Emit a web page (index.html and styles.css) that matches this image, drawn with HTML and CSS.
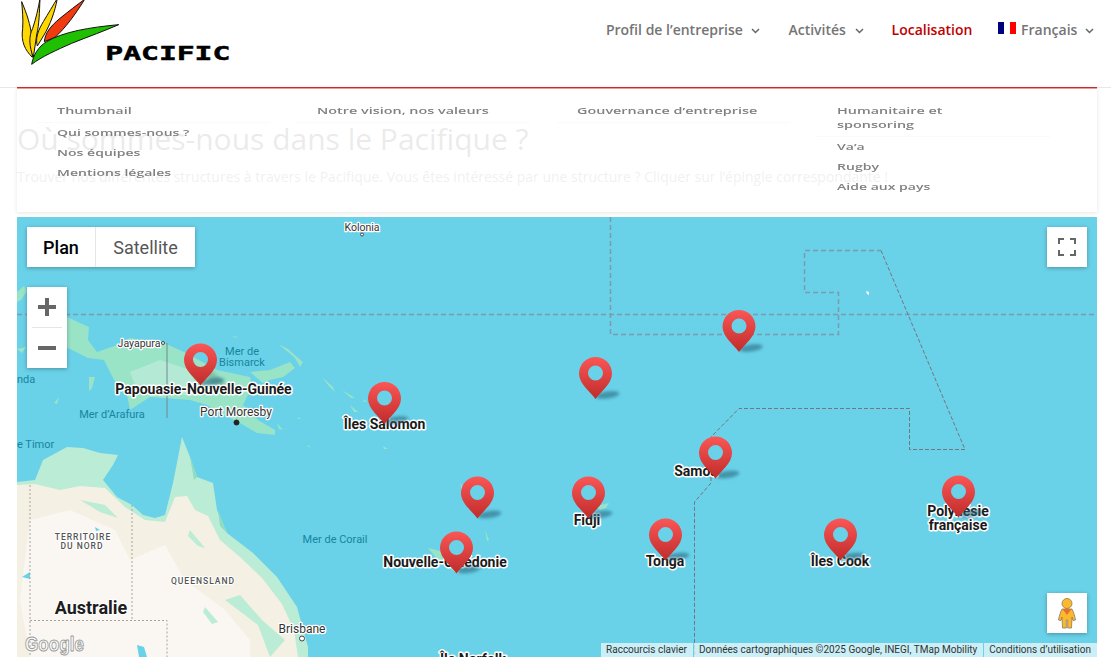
FILE: index.html
```html
<!DOCTYPE html>
<html lang="fr">
<head>
    <meta charset="UTF-8">
    <meta name="viewport" content="width=device-width, initial-scale=1.0">
    <title>Localisation - Pacific</title>
    <link rel="stylesheet" href="styles.css">
</head>
<body>
    <header class="site-header">
        <a href="#" class="logo">
            <svg width="240" height="87" viewBox="0 0 720 261">
                <g stroke="#111" stroke-width="3" stroke-linejoin="round">
                    <path fill="#ffd800" d="M65 5C80 40 92 75 95 110L97 172C75 150 62 125 68 85C70 55 67 30 65 5Z"/>
                    <path fill="#ffd800" d="M120 -5C118 40 118 70 110 105L100 172C88 140 85 110 98 85C108 55 115 25 120 -5Z"/>
                    <path fill="#ffd800" d="M172 -5C165 35 150 75 132 105L112 138C105 115 115 90 130 65C145 40 160 15 172 -5Z"/>
                    <path fill="#f03a10" d="M254 -2C225 45 195 85 165 112L133 125C135 100 150 80 180 55C205 35 230 15 254 -2Z"/>
                    <path fill="#1fc000" d="M356 74C270 82 190 95 140 125C115 140 100 165 95 193C125 170 170 150 215 130C265 110 315 92 356 74Z"/>
                </g>
                <text class="logo-text" x="316" y="179" textLength="375" lengthAdjust="spacingAndGlyphs">PACIFIC</text>
            </svg>
        </a>
        <nav class="main-nav">
            <a href="#" class="nav-item">Profil de l’entreprise <svg class="chevron" width="9" height="6" viewBox="0 0 9 6"><path d="M1 1l3.5 3.5L8 1"/></svg></a>
            <a href="#" class="nav-item">Activités <svg class="chevron" width="9" height="6" viewBox="0 0 9 6"><path d="M1 1l3.5 3.5L8 1"/></svg></a>
            <a href="#" class="nav-item current">Localisation</a>
            <a href="#" class="nav-item lang">
                <span class="flag"><i class="blue"></i><i class="white"></i><i class="red"></i></span>
                Français <svg class="chevron" width="9" height="6" viewBox="0 0 9 6"><path d="M1 1l3.5 3.5L8 1"/></svg>
            </a>
        </nav>
    </header>

    <div class="mega-menu">
        <div class="mega-col">
            <div class="mega-title"><span>Thumbnail</span></div>
            <a href="#">Qui sommes-nous ?</a>
            <a href="#">Nos équipes</a>
            <a href="#">Mentions légales</a>
        </div>
        <div class="mega-col">
            <div class="mega-title"><span>Notre vision, nos valeurs</span></div>
        </div>
        <div class="mega-col">
            <div class="mega-title"><span>Gouvernance d’entreprise</span></div>
        </div>
        <div class="mega-col">
            <div class="mega-title"><span>Humanitaire et</span><span>sponsoring</span></div>
            <a href="#">Va’a</a>
            <a href="#">Rugby</a>
            <a href="#">Aide aux pays</a>
        </div>
    </div>

    <main class="content">
        <h1>Où sommes-nous dans le Pacifique ?</h1>
        <p>Trouver nos différentes structures à travers le Pacifique. Vous êtes intéressé par une structure ? Cliquer sur l’épingle correspondante !</p>

        <div class="map">
            <svg class="map-canvas" width="1080" height="440" viewBox="17 217 1080 440">
                <defs>
                    <linearGradient id="pinFill" x1="0" y1="0" x2="0" y2="1">
                        <stop offset="0" stop-color="#fb5656"/>
                        <stop offset="1" stop-color="#bf2c2a"/>
                    </linearGradient>
                    <filter id="blur" x="-50%" y="-100%" width="200%" height="300%">
                        <feGaussianBlur stdDeviation="1.8"/>
                    </filter>
                    <filter id="soft" x="-20%" y="-20%" width="140%" height="140%">
                        <feGaussianBlur stdDeviation="1.5"/>
                    </filter>
                    <symbol id="pin" overflow="visible">
                        <ellipse cx="12" cy="-4" rx="12" ry="3.5" fill="#2a6a80" fill-opacity=".6" filter="url(#blur)" transform="rotate(-8 12 -4)"/>
                        <path fill="url(#pinFill)" fill-rule="evenodd" d="M0 0C-5-7-16.5-15-16.5-25.5A16.5 16.5 0 0 1 16.5-25.5C16.5-15 5-7 0 0ZM0-33.500a7.500 7.500 0 1 0 0 15a7.500 7.500 0 1 0 0-15Z"/>
                    </symbol>
                </defs>

                <rect x="17" y="217" width="1080" height="440" fill="#69d1e8"/>

                <!-- nouvelle guinee et iles -->
                <g fill="#99e3c7">
                    <path d="M62 315L67 317 89 327 88 340 97 352 117 345 130 338 164 343 184 352 217 370 250 377 252 387 243 405 258 420 275 430 275 435 257 433 240 423 220 413 207 405 190 400 150 397 130 410 127 395 114 380 104 360 88 358 62 345Z"/>
                    <path d="M250 372L270 370 290 362 295 368 283 377 270 380 263 383Z"/>
                    <path d="M278 344L288 349 297 357 303 362 300 367 295 358 287 351Z"/>
                    <path d="M232 336L238 337 236 338Z"/>
                    <path d="M322 377L333 387 335 392 328 385Z"/>
                    <path d="M342 390L355 398 351 398Z"/>
                    <path d="M350 405L358 412 354 412Z"/>
                    <path d="M363 399L367 402 364 402Z"/>
                    <path d="M298 417L301 419 298 419Z"/>
                    <path d="M277 423L283 430 279 429Z"/>
                    <path d="M307 445L311 447 308 447Z"/>
                    <path d="M383 446L388 449 384 449Z"/>
                    <path d="M17 292L24 286 27 291 21 300 17 302Z"/>
                    <path d="M17 349L26 347 22 353Z"/>
                    <path d="M89 377L95 377 92 388 89 391Z"/>
                    <path d="M54 403L59 397 57 404Z"/>
                    <path d="M460 483L465 490 469 500 464 500Z"/>
                    <path d="M472 497L476 508 473 505Z"/>
                    <path d="M485 530L489 540 487 541Z"/>
                    <path d="M428 548L440 551 460 570 458 574 440 562Z"/>
                    <path d="M596 506L609 503 606 508 600 510Z"/>
                </g>
                <path fill="#b4ead5" d="M130 372L160 360 190 370 200 396 150 392 136 388Z"/>
                <path fill="#76b8a2" fill-opacity=".7" filter="url(#soft)" d="M202 368L214 372 226 385 212 385Z"/>

                <!-- australie -->
                <path fill="#bbecd6" d="M17 482L35 480 43 460 67 447 83 448 100 453 118 455 113 465 103 480 117 497 132 505 143 515 155 518 165 515 173 483 182 437 190 457 197 477 213 483 217 510 227 533 253 553 277 577 297 607 308 647 308 657 17 657Z"/>
                <path fill="#f4f0e4" d="M17 485L35 484 60 490 80 486 105 488 125 507 145 520 165 522 175 497 187 496 195 510 208 516 220 540 240 557 262 578 282 604 294 630 298 657 17 657Z"/>
                <path fill="#faf7f3" d="M30 520L70 510 115 530 130 560 165 545 185 580 225 610 250 640 250 657 30 657 20 600Z"/>
                <g fill="#bbecd6">
                    <path d="M80 500L105 505 118 518 100 512Z"/>
                    <path d="M190 530L205 548 198 546 188 536Z"/>
                    <path d="M225 600L240 595 262 620 285 640 270 657 258 625Z"/>
                    <path d="M205 607L218 622 212 624 203 612Z"/>
                </g>
                <g fill="#8fdcc0">
                    <path d="M190 457L197 477 194 480Z"/>
                    <path d="M218 510L227 533 220 526Z"/>
                </g>
                <g fill="#69d1e8">
                    <path d="M22 577L30 572 30 579Z"/>
                    <path d="M137 645L144 647 147 657 139 657Z"/>
                    <path d="M95 527L100 530 96 531Z"/>
                </g>

                <!-- frontieres -->
                <g fill="none">
                    <path class="border-wide" d="M17 314.500H1097"/>
                    <path class="border-wide" d="M610.500 217V334.500H838.500V292.500H804.500V250.500H881"/>
                    <path class="border-thin" d="M881 250.500L965 449.500H909.500V408.500H739L711 437M711 477V483L694.500 502V657"/>
                    <path class="border-land" d="M167 343V418"/>
                    <path class="border-state" d="M30 485V657M132 505V620M30 620.500H167V657"/>
                </g>
                <path fill="#fff" d="M866 291l3 1v3l-2-1z"/>

                <!-- libelles -->
                <text class="water" x="242" y="355">Mer de</text>
                <text class="water" x="242" y="366">Bismarck</text>
                <text class="water" x="112" y="418">Mer d’Arafura</text>
                <text class="water" x="335" y="543">Mer de Corail</text>
                <text class="water start" x="17" y="383">nda</text>
                <text class="water start" x="17" y="448">e Timor</text>
                <text class="city small" x="362" y="231">Kolonia</text>
                <text class="city small" x="139" y="347">Jayapura</text>
                <text class="city" x="236" y="416">Port Moresby</text>
                <text class="city" x="302" y="633">Brisbane</text>
                <circle class="dot" cx="362" cy="234.500" r="1.500"/>
                <circle class="dot" cx="163" cy="343" r="1.500"/>
                <circle class="dot" cx="302" cy="638.500" r="2.500"/>
                <circle class="dot capital" cx="236.500" cy="422.500" r="2.500"/>
                <text class="region" x="83" y="540">TERRITOIRE</text>
                <text class="region" x="82" y="549">DU NORD</text>
                <text class="region" x="203" y="584">QUEENSLAND</text>
                <text class="continent" x="91" y="614">Australie</text>
                <text class="google" x="25" y="651" textLength="59" lengthAdjust="spacingAndGlyphs">Google</text>
                <text class="country" x="203.500" y="394">Papouasie-Nouvelle-Guinée</text>
                <text class="country" x="384.500" y="429">Îles Salomon</text>
                <text class="country" x="696" y="476">Samoa</text>
                <text class="country" x="445" y="567">Nouvelle-Calédonie</text>
                <text class="country" x="587" y="525">Fidji</text>
                <text class="country" x="665" y="566">Tonga</text>
                <text class="country" x="840" y="566">Îles Cook</text>
                <text class="country" x="958" y="516">Polynésie</text>
                <text class="country" x="958" y="530">française</text>
                <text class="country" x="473" y="664">Île Norfolk</text>

                <use href="#pin" x="200.500" y="385.500"/>
                <use href="#pin" x="384.500" y="424"/>
                <use href="#pin" x="595.500" y="399"/>
                <use href="#pin" x="739" y="352"/>
                <use href="#pin" x="715.500" y="478.500"/>
                <use href="#pin" x="588.500" y="518.500"/>
                <use href="#pin" x="477.500" y="518.500"/>
                <use href="#pin" x="456.500" y="573.500"/>
                <use href="#pin" x="665.500" y="560.500"/>
                <use href="#pin" x="840.500" y="560.500"/>
                <use href="#pin" x="958.500" y="517.500"/>
            </svg>

            <div class="map-type">
                <button class="map-btn active">Plan</button>
                <button class="map-btn">Satellite</button>
            </div>

            <button class="ctrl fullscreen">
                <svg width="18" height="18" viewBox="0 0 18 18"><path d="M1 6V1H6M12 1H17V6M17 12V17H12M6 17H1V12"/></svg>
            </button>

            <div class="zoom-ctrl">
                <button class="zoom-btn"><svg width="18" height="18" viewBox="0 0 18 18"><path d="M0 9H18M9 0V18"/></svg></button>
                <div class="zoom-sep"></div>
                <button class="zoom-btn"><svg width="18" height="18" viewBox="0 0 18 18"><path d="M0 9H18"/></svg></button>
            </div>

            <button class="ctrl pegman">
                <svg width="18" height="31" viewBox="0 0 18 31">
                    <circle cx="9" cy="5.500" r="5" fill="#fdb92e" stroke="#8a7a5a" stroke-width=".8"/>
                    <path fill="#fdb92e" stroke="#8a7a5a" stroke-width=".8" d="M4 11H14C15 13 17 18 17.500 22L15 22.500 14 19 13.500 30H9.700V22H8.300V30H4.500L4 19 3 22.500 .5 22C1 18 3 13 4 11Z"/>
                    <path fill="#e8702a" d="M4.500 11H13.500L9 17Z"/>
                </svg>
            </button>

            <div class="attribution">
                <span>Raccourcis clavier</span>
                <span>Données cartographiques ©2025 Google, INEGI, TMap Mobility</span>
                <span>Conditions d’utilisation</span>
            </div>
        </div>
    </main>
</body>
</html>
```

FILE: styles.css
```css
body {
    font-family: 'Open Sans', sans-serif;
    margin: 0;
    padding: 0;
    background-color: white;
    color: #666;
    overflow-x: hidden;
}
a {
    text-decoration: none;
    color: inherit;
}
button {
    border: 0;
    padding: 0;
    background: white;
    cursor: pointer;
}

/* header */
.site-header {
    display: flex;
    justify-content: space-between;
    height: 87px;
    padding-right: 17px;
    border-bottom: 1px solid #e8e8e8;
    overflow: hidden;
}
.logo svg {
    display: block;
}
.logo-text {
    font-family: 'DejaVu Sans Mono', monospace;
    font-weight: bold;
    font-size: 60px;
    fill: #000;
    stroke: #000;
    stroke-width: 1.500px;
}
.main-nav {
    display: flex;
    gap: 28px;
    padding-top: 20px;
    font-size: 14px;
    font-weight: 600;
    line-height: 20px;
}
.nav-item {
    display: block;
    white-space: nowrap;
    color: #757575;
}
.nav-item.current {
    color: #c00000;
}
.nav-item.lang {
    margin-left: -2px;
}
.chevron {
    margin-left: 5px;
    vertical-align: 1px;
    fill: none;
    stroke: #666;
    stroke-width: 1.500;
}
.lang .chevron {
    margin-left: 4px;
}
.flag {
    display: inline-flex;
    width: 18px;
    height: 12px;
    margin-right: 1px;
    vertical-align: 1px;
}
.flag i {
    flex: 1;
}
.flag .blue { background: #000080; }
.flag .white { background: #fff; }
.flag .red { background: #f00; }

/* sous-menu en cours d'ouverture */
.mega-menu {
    position: absolute;
    top: 87px;
    left: 17px;
    box-sizing: border-box;
    display: flex;
    width: 1080px;
    height: 125px;
    padding: 16px 20px 0;
    background: rgba(255, 255, 255, 0.9);
    border-top: 1px solid #c62e2e;
    box-shadow: 0 1px 4px rgba(0, 0, 0, 0.1), inset 0 1px 0 #eb9a9a;
    z-index: 10;
}
.mega-col {
    width: 260px;
}
.mega-title {
    margin-right: 27px;
    padding: 0 0 4px 20px;
    border-bottom: 1px solid #fafafa;
}
.mega-title span,
.mega-col a {
    display: block;
    font-size: 12px;
    font-weight: 600;
    line-height: 14px;
    color: #808080;
    white-space: nowrap;
    transform: scale(1.17, 0.72);
    transform-origin: left center;
}
.mega-title span {
    transform: scale(1.2, 0.72);
}
.mega-col a {
    margin-left: 20px;
    line-height: 20px;
}

/* contenu */
.content {
    padding: 0 14px 0 17px;
}
.content h1 {
    margin: 30px 0 0;
    font-size: 30px;
    font-weight: 400;
    line-height: 42px;
    color: #333;
    white-space: nowrap;
}
.content p {
    margin: 5px 0 0;
    font-size: 14px;
    line-height: 24px;
    color: #666;
    white-space: nowrap;
}

/* carte */
.map {
    position: relative;
    width: 1080px;
    height: 440px;
    margin-top: 28px;
    overflow: hidden;
    font-family: 'Roboto', sans-serif;
}
.map-canvas {
    display: block;
}
.map-canvas text {
    font-family: 'Roboto', sans-serif;
    text-anchor: middle;
    paint-order: stroke;
    stroke-linejoin: round;
}
.map-canvas .start {
    text-anchor: start;
}
.border-wide {
    stroke: #7b9cac;
    stroke-width: 1.500;
    stroke-dasharray: 5 3;
}
.border-thin {
    stroke: #76757f;
    stroke-width: 1;
    stroke-dasharray: 4 2;
}
.border-land {
    stroke: #73898c;
    stroke-width: 1;
}
.border-state {
    stroke: #a8a49c;
    stroke-width: 1;
    stroke-dasharray: 2 2;
}
.water {
    font-size: 11px;
    fill: #17859f;
}
.city {
    font-size: 12px;
    fill: #333;
    stroke: #fff;
    stroke-width: 2.500px;
}
.city.small {
    font-size: 10.500px;
}
.dot {
    fill: #fff;
    stroke: #444;
    stroke-width: 1;
}
.dot.capital {
    fill: #222;
    stroke: #222;
}
.region {
    font-size: 8.500px;
    letter-spacing: 1px;
    fill: #555;
    font-weight: 500;
    stroke: #fff;
    stroke-width: 2px;
}
.continent {
    font-size: 18px;
    font-weight: 700;
    fill: #1d1d1d;
    stroke: #fff;
    stroke-width: 2px;
}
.country {
    font-size: 14px;
    font-weight: 700;
    fill: #1a1a1a;
    stroke: #fff;
    stroke-width: 3px;
}
.map-canvas .google {
    font-family: 'Liberation Sans', sans-serif;
    font-size: 21px;
    font-weight: 700;
    text-anchor: start;
    fill: #fff;
    stroke: #9b9b9b;
    stroke-width: 1px;
    paint-order: normal;
}

/* controles google */
.map-type {
    position: absolute;
    top: 10px;
    left: 10px;
    display: flex;
    height: 40px;
    box-shadow: 0 1px 4px rgba(0, 0, 0, 0.3);
}
.map-btn {
    width: 99px;
    font-family: 'Roboto', sans-serif;
    font-size: 18px;
    color: #565656;
}
.map-btn.active {
    width: 69px;
    font-weight: 500;
    color: #000;
    border-right: 1px solid #e6e6e6;
}
.ctrl {
    position: absolute;
    right: 10px;
    width: 40px;
    height: 40px;
    display: flex;
    align-items: center;
    justify-content: center;
    box-shadow: 0 1px 4px rgba(0, 0, 0, 0.3);
}
.fullscreen {
    top: 10px;
}
.fullscreen path {
    fill: none;
    stroke: #666;
    stroke-width: 2;
}
.pegman {
    top: 376px;
}
.zoom-ctrl {
    position: absolute;
    top: 70px;
    left: 10px;
    width: 40px;
    height: 81px;
    background: white;
    box-shadow: 0 1px 4px rgba(0, 0, 0, 0.3);
}
.zoom-btn {
    display: flex;
    align-items: center;
    justify-content: center;
    width: 40px;
    height: 40px;
}
.zoom-btn path {
    stroke: #666;
    stroke-width: 4;
}
.zoom-sep {
    height: 1px;
    margin: 0 5px;
    background: #e6e6e6;
}
.attribution {
    position: absolute;
    right: 0;
    bottom: 0;
    display: flex;
    height: 14px;
    font-size: 10px;
    line-height: 14px;
    color: #333;
}
.attribution span {
    padding: 0 6px 0 5px;
    margin-left: 1px;
    background: rgba(255, 255, 255, 0.65);
    white-space: nowrap;
}
```
